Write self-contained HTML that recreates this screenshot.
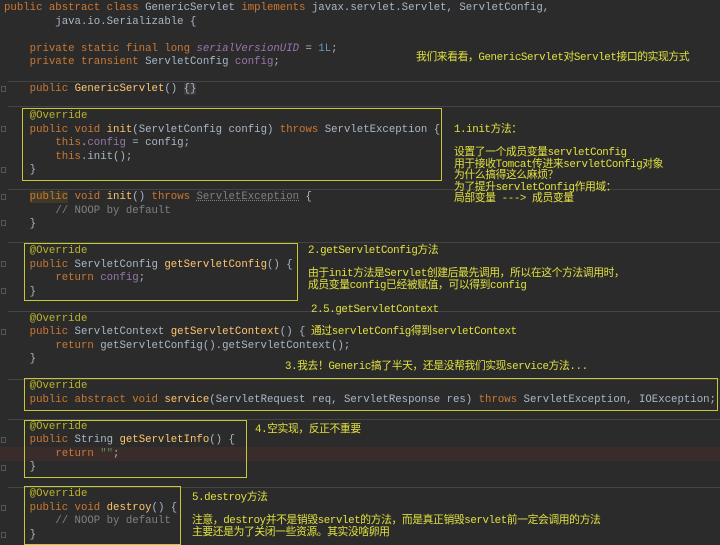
<!DOCTYPE html>
<html><head><meta charset="utf-8"><style>
body{margin:0;width:720px;height:545px;background:#2b2b2b;overflow:hidden;position:relative}
.c{position:absolute;left:4px;font-family:"Liberation Mono",monospace;font-size:10.7px;line-height:13.5px;color:#a9b7c6;white-space:pre}
.k{color:#cc7832}.p{color:#9876aa}.a{color:#bbb529}.cm{color:#808080}.s{color:#6a8759}.n{color:#6897bb}.f{color:#ffc66d}
.sep{position:absolute;left:8px;right:0;height:1px;background:#444}
.box{position:absolute;border:1.5px solid #c8c832;box-sizing:border-box}
.t{position:absolute;font-family:"Liberation Mono","WenQuanYi Zen Hei",monospace;font-size:10.8px;line-height:11.5px;color:#e0e040;white-space:pre;letter-spacing:-0.4px}
.g{position:absolute;left:1px;width:5px;height:6px;border:1px solid #555;box-sizing:border-box}
</style></head><body>
<div style="position:absolute;left:0;right:0;top:447px;height:14px;background:#3b2c2c"></div>
<div class="sep" style="top:81px"></div>
<div class="sep" style="top:106px"></div>
<div class="sep" style="top:189px"></div>
<div class="sep" style="top:242px"></div>
<div class="sep" style="top:311px"></div>
<div class="sep" style="top:379px"></div>
<div class="sep" style="top:419px"></div>
<div class="sep" style="top:487px"></div>
<div class="g" style="top:86px"></div><div class="g" style="top:126px"></div><div class="g" style="top:167px"></div>
<div class="g" style="top:194px"></div><div class="g" style="top:220px"></div><div class="g" style="top:261px"></div>
<div class="g" style="top:288px"></div><div class="g" style="top:329px"></div><div class="g" style="top:437px"></div>
<div class="g" style="top:465px"></div><div class="g" style="top:505px"></div><div class="g" style="top:532px"></div>
<div class="c" style="top:2px"><span class="k">public abstract class</span> GenericServlet <span class="k">implements</span> javax.servlet.Servlet, ServletConfig,
        java.io.Serializable {

    <span class="k">private static final long</span> <span class="p"><i>serialVersionUID</i></span> = <span class="n">1L</span>;
    <span class="k">private transient</span> ServletConfig <span class="p">config</span>;

    <span class="k">public</span> <span class="f">GenericServlet</span>() <span style="background:#3a3a3a">{}</span>

    <span class="a">@Override</span>
    <span class="k">public void</span> <span class="f">init</span>(ServletConfig config) <span class="k">throws</span> ServletException {
        <span class="k">this</span>.<span class="p">config</span> = config;
        <span class="k">this</span>.init();
    }

    <span class="k" style="background:#3f3a28">public</span> <span class="k">void</span> <span class="f">init</span>() <span class="k">throws</span> <span style="color:#808080;text-decoration:underline dotted">ServletException</span> {
        <span class="cm">// NOOP by default</span>
    }

    <span class="a">@Override</span>
    <span class="k">public</span> ServletConfig <span class="f">getServletConfig</span>() {
        <span class="k">return</span> <span class="p">config</span>;
    }

    <span class="a">@Override</span>
    <span class="k">public</span> ServletContext <span class="f">getServletContext</span>() {
        <span class="k">return</span> getServletConfig().getServletContext();
    }

    <span class="a">@Override</span>
    <span class="k">public abstract void</span> <span class="f">service</span>(ServletRequest req, ServletResponse res) <span class="k">throws</span> ServletException, IOException;

    <span class="a">@Override</span>
    <span class="k">public</span> String <span class="f">getServletInfo</span>() {
        <span class="k">return</span> <span class="s">""</span>;
    }

    <span class="a">@Override</span>
    <span class="k">public void</span> <span class="f">destroy</span>() {
        <span class="cm">// NOOP by default</span>
    }</div>
<div class="box" style="left:22px;top:108px;width:420px;height:73px"></div>
<div class="box" style="left:24px;top:243px;width:274px;height:58px"></div>
<div class="box" style="left:24px;top:378px;width:694px;height:33px"></div>
<div class="box" style="left:24px;top:420px;width:223px;height:58px"></div>
<div class="box" style="left:24px;top:486px;width:157px;height:59px"></div>
<div class="t" style="left:416px;top:53px">我们来看看，GenericServlet对Servlet接口的实现方式</div>
<div class="t" style="left:454px;top:125px">1.init方法：

设置了一个成员变量servletConfig
用于接收Tomcat传进来servletConfig对象
为什么搞得这么麻烦？
为了提升servletConfig作用域：
局部变量 ---> 成员变量</div>
<div class="t" style="left:308px;top:246px">2.getServletConfig方法

由于init方法是Servlet创建后最先调用，所以在这个方法调用时，
成员变量config已经被赋值，可以得到config</div>
<div class="t" style="left:311px;top:305px">2.5.getServletContext</div>
<div class="t" style="left:311px;top:327px">通过servletConfig得到servletContext</div>
<div class="t" style="left:285px;top:362px">3.我去！Generic搞了半天，还是没帮我们实现service方法...</div>
<div class="t" style="left:255px;top:425px">4.空实现，反正不重要</div>
<div class="t" style="left:192px;top:493px">5.destroy方法

注意，destroy并不是销毁servlet的方法，而是真正销毁servlet前一定会调用的方法
主要还是为了关闭一些资源。其实没啥卵用</div>
</body></html>
